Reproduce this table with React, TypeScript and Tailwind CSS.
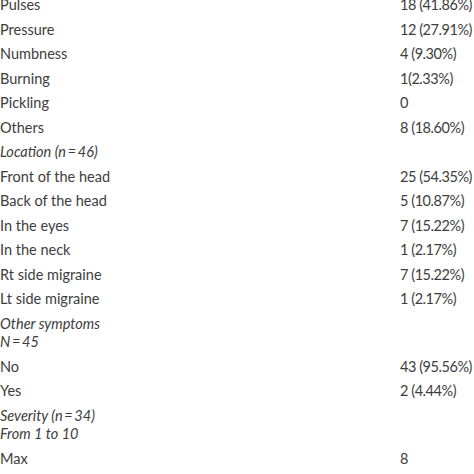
type Row = {
  label: string[];
  value?: string;
  italic?: boolean;
};

const ROWS: Row[] = [
  { label: ['Pulses'], value: '18 (41.86%)' },
  { label: ['Pressure'], value: '12 (27.91%)' },
  { label: ['Numbness'], value: '4 (9.30%)' },
  { label: ['Burning'], value: '1(2.33%)' },
  { label: ['Pickling'], value: '0' },
  { label: ['Others'], value: '8 (18.60%)' },
  { label: ['Location (n\u2009=\u200946)'], italic: true },
  { label: ['Front of the head'], value: '25 (54.35%)' },
  { label: ['Back of the head'], value: '5 (10.87%)' },
  { label: ['In the eyes'], value: '7 (15.22%)' },
  { label: ['In the neck'], value: '1 (2.17%)' },
  { label: ['Rt side migraine'], value: '7 (15.22%)' },
  { label: ['Lt side migraine'], value: '1 (2.17%)' },
  { label: ['Other symptoms', 'N\u2009=\u200945'], italic: true },
  { label: ['No'], value: '43 (95.56%)' },
  { label: ['Yes'], value: '2 (4.44%)' },
  { label: ['Severity (n\u2009=\u200934)', 'From 1 to 10'], italic: true },
  { label: ['Max'], value: '8' },
];

export default function App() {
  return (
    <div
      className="w-[474px] h-[474px] overflow-hidden bg-white text-[#3d3d3d] text-[14.5px]"
      style={{ fontFamily: 'Lato, "Open Sans", sans-serif' }}
    >
      <div className="mt-[-7px] flex flex-col">
        {ROWS.map((row, i) => (
          <div key={i} className="flex py-[3px] leading-[18.5px]">
            <div className={`w-[400px] shrink-0 ${row.italic ? 'italic' : ''}`}>
              {row.label.map((l, j) => (
                <div key={j}>{l}</div>
              ))}
            </div>
            <div className="whitespace-nowrap tracking-[-0.45px]">{row.value}</div>
          </div>
        ))}
      </div>
    </div>
  );
}
